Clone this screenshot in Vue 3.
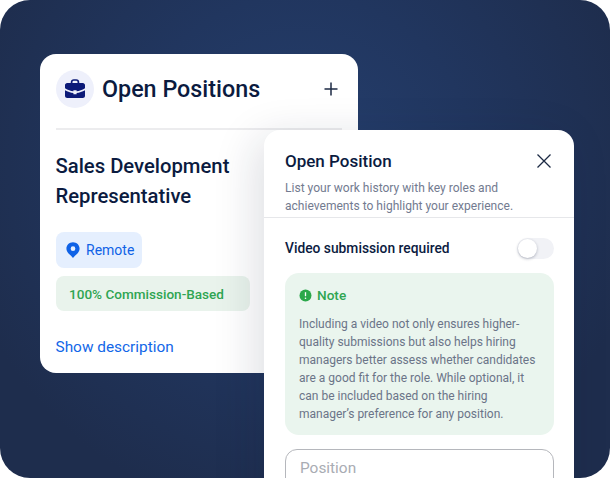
<template>
  <div class="stage">
    <section class="card">
      <header class="card-head">
        <span class="avatar">
          <svg width="20" height="20" viewBox="0 0 20 20">
            <path d="M6.600 4.600V3.200C6.600 1.900 7.500 1 8.800 1h2.400c1.300 0 2.200.9 2.200 2.200v1.400" fill="none" stroke="#0c1a78" stroke-width="1.700"/>
            <path d="M2.200 4h15.600c1.200 0 2.200 1 2.200 2.200v3c-2.800 1.700-5.700 2.800-8.400 3.100v-1.100H8.400v1.100C5.700 12 2.800 10.900 0 9.200v-3C0 5 1 4 2.200 4z" fill="#0c1a78"/>
            <path d="M0 11.200c2.700 1.500 5.600 2.500 8.400 2.800v1.200h3.200V14c2.800-.3 5.700-1.300 8.400-2.800v5.600c0 1.400-1 2.200-2.200 2.200H2.200C1 19 0 18.200 0 16.800z" fill="#0c1a78"/>
          </svg>
        </span>
        <h1 class="card-title">Open Positions</h1>
        <svg class="plus" width="16" height="16" viewBox="0 0 16 16">
          <path d="M8 1.500v13M1.500 8h13" stroke="#1c2a44" stroke-width="1.500" fill="none"/>
        </svg>
      </header>
      <div class="card-rule"></div>
      <h2 class="job">Sales Development<br>Representative</h2>
      <div class="tag tag-blue">
        <svg width="14" height="16" viewBox="0 0 14 17">
          <path fill-rule="evenodd" d="M7 .2C3.100.2 0 3.200 0 7c0 2.100 1 3.800 2.500 5.400 1.300 1.300 3 2.700 4.500 4.500 1.500-1.800 3.200-3.200 4.500-4.500C13 10.800 14 9.100 14 7 14 3.200 10.900.2 7 .2zm0 4.400a2.500 2.500 0 1 1 0 5 2.500 2.500 0 0 1 0-5z" fill="#0f62e6"/>
        </svg>
        <span>Remote</span>
      </div>
      <div class="tag tag-green">100% Commission-Based</div>
      <a class="show">Show description</a>
    </section>

    <section class="modal">
      <header class="modal-head">
        <div class="modal-title-row">
          <h3 class="modal-title">Open Position</h3>
          <svg width="16" height="16" viewBox="0 0 16 16">
            <path d="M1.500 1.500l13 13M14.500 1.500l-13 13" stroke="#1c2a44" stroke-width="1.300" fill="none"/>
          </svg>
        </div>
        <p class="modal-sub">List your work history with key roles and achievements to highlight your experience.</p>
      </header>
      <div class="modal-body">
        <div class="switch-row">
          <span class="switch-label">Video submission required</span>
          <span class="switch"><span class="knob"></span></span>
        </div>
        <div class="note">
          <div class="note-head">
            <svg width="13" height="13" viewBox="0 0 13 13">
              <circle cx="6.500" cy="6.500" r="6" fill="#2ba84a"/>
              <path d="M6.500 3.200v4" stroke="#fff" stroke-width="1.300" fill="none"/>
              <circle cx="6.500" cy="9.200" r=".8" fill="#fff"/>
            </svg>
            <span>Note</span>
          </div>
          <p class="note-text">Including a video not only ensures higher-<br>quality submissions but also helps hiring<br>managers better assess whether candidates<br>are a good fit for the role. While optional, it<br>can be included based on the hiring<br>manager’s preference for any position.</p>
        </div>
        <div class="field">Position</div>
      </div>
    </section>
  </div>
</template>

<script setup>
</script>

<style>
html, body { margin: 0; background: #fff; }
</style>

<style scoped>
.stage {
  position: relative;
  width: 610px;
  height: 478px;
  overflow: hidden;
  border-radius: 30px;
  background: radial-gradient(circle at 300px 170px, #253f6e 0%, #21365f 40%, #1e2d4d 80%);
  font-family: Roboto, "Liberation Sans", sans-serif;
}
.card {
  position: absolute;
  left: 40px;
  top: 54px;
  width: 318px;
  height: 319px;
  box-sizing: border-box;
  padding: 16px 16px 0 15.500px;
  border-radius: 16px;
  background: #fff;
}
.card-head {
  display: flex;
  align-items: center;
  height: 38px;
}
.avatar {
  width: 38px;
  height: 38px;
  flex: none;
  border-radius: 50%;
  background: #eef0fb;
  display: flex;
  align-items: center;
  justify-content: center;
}
.card-title {
  margin: 0 0 0 8.500px;
  flex: 1;
  font-size: 23.300px;
  font-weight: 500;
  line-height: 32px;
  color: #0b1b3f;
}
.plus { margin-right: 3px; }
.card-rule {
  height: 2px;
  margin-top: 20px;
  background: #ececee;
}
.job {
  margin: 21px 0 0;
  font-size: 20.250px;
  font-weight: 500;
  line-height: 30px;
  color: #0b1b3f;
}
.tag {
  box-sizing: border-box;
  border-radius: 8px;
  display: flex;
  align-items: center;
  font-size: 14px;
}
.tag-blue {
  margin-top: 21px;
  height: 36px;
  width: 86.500px;
  padding-left: 10.500px;
  gap: 6px;
  background: #e5effe;
  color: #0f62e6;
}
.tag-green {
  margin-top: 8px;
  height: 35px;
  width: 194px;
  padding-left: 13.500px;
  background: #e9f3ec;
  color: #2fa552;
  font-size: 13.550px;
  font-weight: 500;
}
.show {
  display: block;
  margin-top: 26px;
  font-size: 15.400px;
  line-height: 20px;
  color: #1267e8;
}
.modal {
  position: absolute;
  left: 264px;
  top: 130px;
  width: 310px;
  height: 400px;
  border-radius: 16px;
  background: #fff;
  box-shadow: -8px 8px 44px rgba(20, 30, 60, 0.14);
}
.modal-head {
  padding: 20px 22px 0 21px;
  height: 67px;
  border-bottom: 1px solid #e6e7ea;
}
.modal-title-row {
  display: flex;
  align-items: center;
  justify-content: space-between;
  height: 22px;
}
.modal-title {
  margin: 0;
  font-size: 17px;
  font-weight: 500;
  color: #0b1b3f;
}
.modal-sub {
  margin: 7px 0 0;
  font-size: 12.050px;
  line-height: 18px;
  color: #737b90;
}
.modal-body {
  padding: 20px 20px 0 21px;
}
.switch-row {
  display: flex;
  align-items: center;
  justify-content: space-between;
  height: 20px;
}
.switch-label {
  font-size: 13.800px;
  font-weight: 500;
  color: #0b1b3f;
}
.switch {
  display: block;
  position: relative;
  width: 37px;
  height: 21px;
  border-radius: 11px;
  background: #f1f2f6;
}
.knob {
  position: absolute;
  left: 1px;
  top: 1px;
  width: 19px;
  height: 19px;
  border-radius: 50%;
  background: #fff;
  box-shadow: 0 1px 3px rgba(20, 30, 60, 0.3);
}
.note {
  margin-top: 15px;
  height: 162px;
  box-sizing: border-box;
  padding: 14px 14px 0;
  border-radius: 14px;
  background: #eaf5ee;
}
.note-head {
  display: flex;
  align-items: center;
  gap: 5px;
  height: 16px;
  font-size: 13.600px;
  font-weight: 500;
  color: #2fa552;
}
.note-text {
  margin: 12px 0 0;
  font-size: 12px;
  line-height: 18px;
  color: #6b7488;
}
.field {
  margin-top: 14px;
  height: 50px;
  box-sizing: border-box;
  padding: 9px 14px;
  border: 1px solid #b5b7bc;
  border-radius: 12px;
  font-size: 15.400px;
  color: #a9acb3;
}
</style>
